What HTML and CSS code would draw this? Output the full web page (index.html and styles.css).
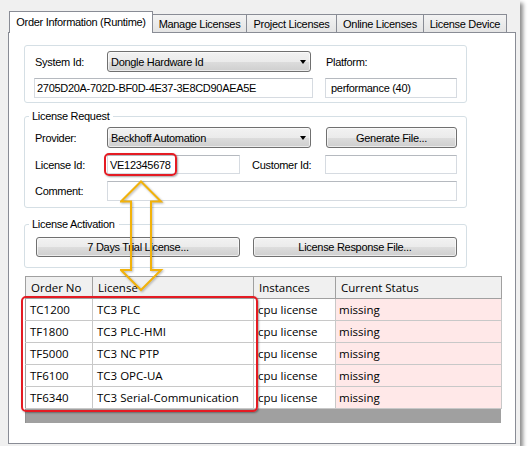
FILE: index.html
```html
<!DOCTYPE html>
<html>
<head>
<meta charset="utf-8">
<link rel="stylesheet" href="styles.css">
</head>
<body>
<div class="window">
  <div class="tabbar">
    <div class="tab active t1">Order Information (Runtime)</div>
    <div class="tab t2">Manage Licenses</div>
    <div class="tab t3">Project Licenses</div>
    <div class="tab t4">Online Licenses</div>
    <div class="tab t5">License Device</div>
  </div>
  <div class="panel">
    <div class="group sys">
      <span class="lbl">System Id:</span>
      <div class="combo c-sys"><span>Dongle Hardware Id</span><i class="tri"></i></div>
      <span class="lbl plat-lbl">Platform:</span>
      <div class="field f-guid">2705D20A-702D-BF0D-4E37-3E8CD90AEA5E</div>
      <div class="field f-plat">performance (40)</div>
    </div>
    <fieldset class="group req">
      <legend>License Request</legend>
      <div class="req-grid">
        <span class="lbl">Provider:</span>
        <div class="combo c-prov"><span>Beckhoff Automation</span><i class="tri"></i></div>
        <div class="btn b-gen">Generate File...</div>
        <span class="lbl">License Id:</span>
        <div class="field f-lic">VE12345678</div>
        <span class="lbl cust-lbl">Customer Id:</span>
        <div class="field f-cust"></div>
        <span class="lbl">Comment:</span>
        <div class="field f-com"></div>
      </div>
    </fieldset>
    <fieldset class="group act">
      <legend>License Activation</legend>
      <div class="act-row">
        <div class="btn b-act">7 Days Trial License...</div>
        <div class="btn b-act">License Response File...</div>
      </div>
    </fieldset>
    <div class="lic-wrap">
      <table class="lic">
        <colgroup>
          <col class="c1"><col class="c2"><col class="c3"><col class="c4">
        </colgroup>
        <thead>
          <tr><th>Order No</th><th>License</th><th>Instances</th><th>Current Status</th></tr>
        </thead>
        <tbody>
          <tr><td>TC1200</td><td>TC3 PLC</td><td>cpu license</td><td class="st">missing</td></tr>
          <tr><td>TF1800</td><td>TC3 PLC-HMI</td><td>cpu license</td><td class="st">missing</td></tr>
          <tr><td>TF5000</td><td>TC3 NC PTP</td><td>cpu license</td><td class="st">missing</td></tr>
          <tr><td>TF6100</td><td>TC3 OPC-UA</td><td>cpu license</td><td class="st">missing</td></tr>
          <tr><td>TF6340</td><td>TC3 Serial-Communication</td><td>cpu license</td><td class="st">missing</td></tr>
        </tbody>
      </table>
      <div class="hbar"></div>
    </div>

    <svg class="arrow" width="44" height="114" viewBox="0 0 44 114">
      <polygon points="21,1.5 41,21.5 31,21.5 31,90 41,90 21,110 1,90 11,90 11,21.5 1,21.5" fill="none" stroke="#f2b20a" stroke-width="2" stroke-linejoin="miter"/>
      <polygon points="21,3.5 38.5,20.5 30,20.5" fill="none" stroke="none"/>
    </svg>
    <div class="hl hl-id"></div>
    <div class="hl hl-rows"></div>
  </div>
</div>
</body>
</html>
```
FILE: styles.css
```css
* { box-sizing: border-box; }

body {
  margin: 0;
  background: #ffffff;
  font-family: "Liberation Sans", Arial, sans-serif;
  font-size: 11px;
  letter-spacing: -0.3px;
  color: #000;
}

.window {
  width: 520px;
  height: 446px;
  background: #f0f0f0;
  box-shadow: 3px 3px 4px rgba(0, 0, 0, 0.45);
}

.tabbar {
  display: flex;
  align-items: flex-end;
  height: 32px;
  padding: 11px 0 0 9px;
}

.tab {
  height: 18px;
  border: 1px solid #898c95;
  border-bottom: 0;
  background: linear-gradient(#f3f3f3, #e4e4e4);
  display: flex;
  align-items: center;
  justify-content: center;
  margin-left: -1px;
  white-space: nowrap;
}

.tab.active {
  height: 22px;
  margin-left: 0;
  margin-bottom: -1px;
  background: #ffffff;
  position: relative;
  z-index: 2;
  padding-bottom: 1px;
}

.t1 { width: 144px; }
.t2 { width: 95px; }
.t3 { width: 91px; }
.t4 { width: 88px; }
.t5 { width: 84px; }

.panel {
  position: relative;
  margin-left: 8px;
  width: 508px;
  height: 412px;
  border: 1px solid #898c95;
  background: #ffffff;
  padding: 12px 0 0 15px;
}

.group {
  width: 443px;
  border: 1px solid #d5dfe5;
  border-radius: 3px;
}

.sys {
  height: 58px;
  padding: 5px 0 0 9px;
  display: grid;
  grid-template-columns: 73px 206px 12px 132px;
  grid-template-rows: 21px 20px;
  row-gap: 6px;
  align-content: start;
}

.lbl {
  align-self: center;
  padding-left: 1px;
  white-space: nowrap;
}

.plat-lbl { grid-column: 4; }

.combo {
  width: 204px;
  border: 1px solid #707070;
  border-radius: 3px;
  background: linear-gradient(#f2f2f2 0%, #ebebeb 50%, #dddddd 51%, #cfcfcf 100%);
  box-shadow: inset 0 0 0 1px rgba(255, 255, 255, 0.6);
  display: flex;
  align-items: center;
  justify-content: space-between;
  padding: 0 4px 0 3px;
}

.tri {
  width: 0;
  height: 0;
  border-left: 3.5px solid transparent;
  border-right: 3.5px solid transparent;
  border-top: 4px solid #000;
}

.field {
  border: 1px solid #d6dbe1;
  border-top-color: #b5b9bf;
  background: #fff;
  display: flex;
  align-items: center;
  padding-left: 2px;
  white-space: nowrap;
}

.f-guid { grid-column: 1 / 3; width: 279px; }
.f-plat { grid-column: 4; padding-left: 5px; }

fieldset.group {
  margin: 6px 0 0;
  padding: 0;
  min-inline-size: auto;
}

legend {
  margin-left: 4px;
  padding: 0 4px 0 3px;
  height: 14px;
  line-height: 14px;
}

.req-grid {
  display: grid;
  padding: 4px 0 6px 9px;
  grid-template-columns: 73px 133px 12px 59px 14px 132px;
  grid-template-rows: 21px 19px 20px;
  row-gap: 7px;
}

.c-prov { grid-column: 2 / 5; }
.b-gen { grid-column: 6; margin-left: 1px; }
.f-lic { grid-column: 2; }
.cust-lbl { grid-column: 4 / 6; padding-left: 0; }
.f-cust { grid-column: 6; }
.f-com { grid-column: 2 / 7; }

.btn {
  border: 1px solid #707070;
  border-radius: 3px;
  background: linear-gradient(#f2f2f2 0%, #ebebeb 50%, #dddddd 51%, #cfcfcf 100%);
  box-shadow: inset 0 0 0 1px rgba(255, 255, 255, 0.6);
  display: flex;
  align-items: center;
  justify-content: center;
  white-space: nowrap;
}

fieldset.act { margin-top: 9px; }

.act-row {
  display: flex;
  gap: 13px;
  padding: 6px 0 10px 11px;
}

.b-act { width: 204px; height: 20px; }

.lic-wrap {
  width: 476px;
  margin: 8px 0 0 1px;
  font-family: "Open Sans", "Noto Sans", sans-serif;
  font-size: 11.5px;
  letter-spacing: 0;
}

.lic {
  width: 476px;
  border-collapse: collapse;
  table-layout: fixed;
}

.c1 { width: 67px; }
.c2 { width: 161px; }
.c3 { width: 82px; }
.c4 { width: 166px; }

.lic th {
  height: 22px;
  font-weight: normal;
  text-align: left;
  padding: 0 4px 0 5px;
  background: #f0f0f0;
  border: 1px solid #a0a0a0;
  white-space: nowrap;
}

.lic td {
  height: 22px;
  padding: 0 4px;
  border: 1px solid #c8c8c8;
  white-space: nowrap;
  overflow: hidden;
}

.lic td:first-child { border-left-color: #a0a0a0; }

.lic td.st {
  background: #ffe8e8;
  padding-left: 3px;
}

.hbar {
  height: 14px;
  background: #a0a0a0;
  border-left: 1px solid #909090;
}

.arrow {
  position: absolute;
  left: 111px;
  top: 147px;
  filter: drop-shadow(1px 1px 1px rgba(0, 0, 0, 0.3));
  z-index: 3;
}

.hl {
  position: absolute;
  border: 2px solid #e41b23;
  border-radius: 5px;
  box-shadow: 1px 1px 2px rgba(0, 0, 0, 0.35);
  z-index: 3;
}

.hl-id {
  left: 95px;
  top: 120px;
  width: 73px;
  height: 23px;
}

.hl-rows {
  left: 12px;
  top: 263px;
  width: 237px;
  height: 116px;
}
```
